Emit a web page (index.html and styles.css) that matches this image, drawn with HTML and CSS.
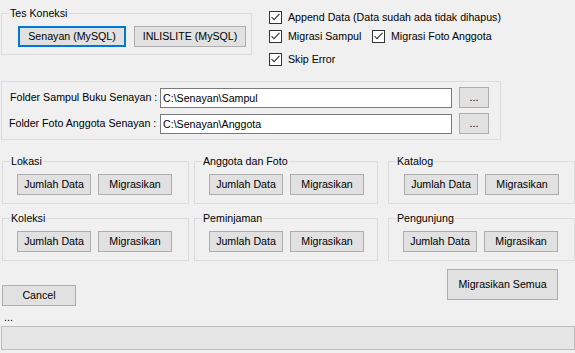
FILE: index.html
```html
<!DOCTYPE html>
<html>
<head>
<meta charset="utf-8">
<link rel="stylesheet" href="styles.css">
</head>
<body>
<div class="top">
  <fieldset class="grp conn">
    <legend>Tes Koneksi</legend>
    <div class="conn-body">
      <button class="btn focus w108">Senayan (MySQL)</button>
      <button class="btn w112">INLISLITE (MySQL)</button>
    </div>
  </fieldset>
  <div class="opts">
    <div class="opt-row r1">
      <label class="chk"><span class="box"><svg width="11" height="11" viewBox="0 0 11 11"><path d="M1.5 5 L4 7.7 L9.5 1.8" fill="none" stroke="#333" stroke-width="1.1"/></svg></span>Append Data (Data sudah ada tidak dihapus)</label>
    </div>
    <div class="opt-row r2">
      <label class="chk first"><span class="box"><svg width="11" height="11" viewBox="0 0 11 11"><path d="M1.5 5 L4 7.7 L9.5 1.8" fill="none" stroke="#333" stroke-width="1.1"/></svg></span>Migrasi Sampul</label>
      <label class="chk"><span class="box"><svg width="11" height="11" viewBox="0 0 11 11"><path d="M1.5 5 L4 7.7 L9.5 1.8" fill="none" stroke="#333" stroke-width="1.1"/></svg></span>Migrasi Foto Anggota</label>
    </div>
    <div class="opt-row r3">
      <label class="chk"><span class="box"><svg width="11" height="11" viewBox="0 0 11 11"><path d="M1.5 5 L4 7.7 L9.5 1.8" fill="none" stroke="#333" stroke-width="1.1"/></svg></span>Skip Error</label>
    </div>
  </div>
</div>

<div class="folders">
  <div class="frow">
    <span class="flabel">Folder Sampul Buku Senayan :</span>
    <span class="tbox">C:\Senayan\Sampul</span>
    <button class="btn dots">...</button>
  </div>
  <div class="frow">
    <span class="flabel l2">Folder Foto Anggota Senayan :</span>
    <span class="tbox">C:\Senayan\Anggota</span>
    <button class="btn dots">...</button>
  </div>
</div>

<div class="groups">
  <fieldset class="grp g w187"><legend>Lokasi</legend>
    <div class="gbody"><button class="btn w74">Jumlah Data</button><button class="btn w74">Migrasikan</button></div>
  </fieldset>
  <fieldset class="grp g w184"><legend>Anggota dan Foto</legend>
    <div class="gbody"><button class="btn w74">Jumlah Data</button><button class="btn w74">Migrasikan</button></div>
  </fieldset>
  <fieldset class="grp g w187"><legend>Katalog</legend>
    <div class="gbody p15"><button class="btn w74">Jumlah Data</button><button class="btn w74">Migrasikan</button></div>
  </fieldset>
  <fieldset class="grp g w187"><legend>Koleksi</legend>
    <div class="gbody"><button class="btn w74">Jumlah Data</button><button class="btn w74">Migrasikan</button></div>
  </fieldset>
  <fieldset class="grp g w184"><legend>Peminjaman</legend>
    <div class="gbody"><button class="btn w74">Jumlah Data</button><button class="btn w74">Migrasikan</button></div>
  </fieldset>
  <fieldset class="grp g w187"><legend>Pengunjung</legend>
    <div class="gbody"><button class="btn w74">Jumlah Data</button><button class="btn w74">Migrasikan</button></div>
  </fieldset>
</div>

<div class="actions">
  <button class="btn w74 cancel">Cancel</button>
  <button class="btn big">Migrasikan Semua</button>
</div>
<div class="status">...</div>
<div class="progress"></div>
</body>
</html>
```
FILE: styles.css
```css
html, body {
  margin: 0;
  padding: 0;
}
body {
  background: #f0f0f0;
  font: 10.65px/13px "Liberation Sans", Arial, sans-serif;
  color: #000;
  width: 575px;
  height: 353px;
  overflow: hidden;
}

.btn {
  box-sizing: border-box;
  height: 21px;
  margin: 0;
  padding: 0;
  border: 1px solid #adadad;
  background: #e1e1e1;
  font: inherit;
  color: #000;
  line-height: 19px;
  text-align: center;
  white-space: nowrap;
}
.btn.focus {
  border: 2px solid #0078d7;
  line-height: 17px;
}
.w108 { width: 108px; }
.w112 { width: 112px; }
.w74 { width: 74px; }

.grp {
  box-sizing: border-box;
  margin: 0;
  padding: 0;
  border: 1px solid #dcdcdc;
  min-width: 0;
}
.grp legend {
  margin-left: 7px;
  padding: 0 1px;
  line-height: 13px;
}

/* top */
.top {
  display: flex;
  align-items: flex-start;
  height: 81px;
}
.conn {
  width: 251px;
  margin: 7px 0 0 1px;
}
.conn-body {
  display: flex;
  gap: 8px;
  padding: 6px 0 7px 16px;
}

.opts {
  margin-left: 17px;
  padding-top: 11px;
}
.opt-row {
  display: flex;
  align-items: flex-start;
}
.r1 { height: 19px; }
.r2 { height: 23px; }
.r3 { height: 13px; }
.chk {
  display: flex;
  align-items: center;
  height: 13px;
  white-space: nowrap;
}
.chk.first { width: 103px; }
.chk .box {
  box-sizing: border-box;
  width: 13px;
  height: 13px;
  border: 1px solid #333;
  background: #fff;
  margin-right: 6px;
  display: flex;
}
.chk .box svg { display: block; }

/* folders */
.folders {
  box-sizing: border-box;
  width: 500px;
  margin-left: 1px;
  border: 1px solid #dcdcdc;
  padding: 5px 0 5px 7px;
  display: flex;
  flex-direction: column;
  gap: 5px;
}
.frow {
  display: flex;
  align-items: flex-start;
  height: 21px;
}
.flabel {
  width: 151px;
  padding-left: 1px;
  box-sizing: border-box;
  line-height: 21px;
  white-space: nowrap;
}
.flabel.l2 { padding-left: 0; }
.tbox {
  box-sizing: border-box;
  width: 292px;
  height: 20px;
  margin-top: 1px;
  margin-right: 7px;
  border: 1px solid #7a7a7a;
  background: #fff;
  padding-left: 2px;
  line-height: 18px;
  white-space: nowrap;
}
.dots { width: 30px; }

/* groups */
.groups {
  display: grid;
  grid-template-columns: 192px 194px 187px;
  row-gap: 8px;
  margin: 15px 0 0 2px;
}
.w187 { width: 187px; }
.w184 { width: 184px; }
.gbody {
  display: flex;
  gap: 7px;
  padding: 6px 0 8px 14px;
}
.gbody.p15 { padding-left: 15px; }

/* bottom */
.actions {
  display: flex;
  align-items: flex-start;
  justify-content: space-between;
  margin-top: 8px;
  padding: 0 17px 0 2px;
}
.cancel { margin-top: 16px; }
.big {
  width: 111px;
  height: 31px;
  line-height: 29px;
}
.status {
  margin: 5px 0 0 4px;
  height: 13px;
}
.progress {
  box-sizing: border-box;
  width: 574px;
  height: 24px;
  margin: 2px 0 0 1px;
  border: 1px solid #bcbcbc;
  background: #e6e6e6;
}
```
